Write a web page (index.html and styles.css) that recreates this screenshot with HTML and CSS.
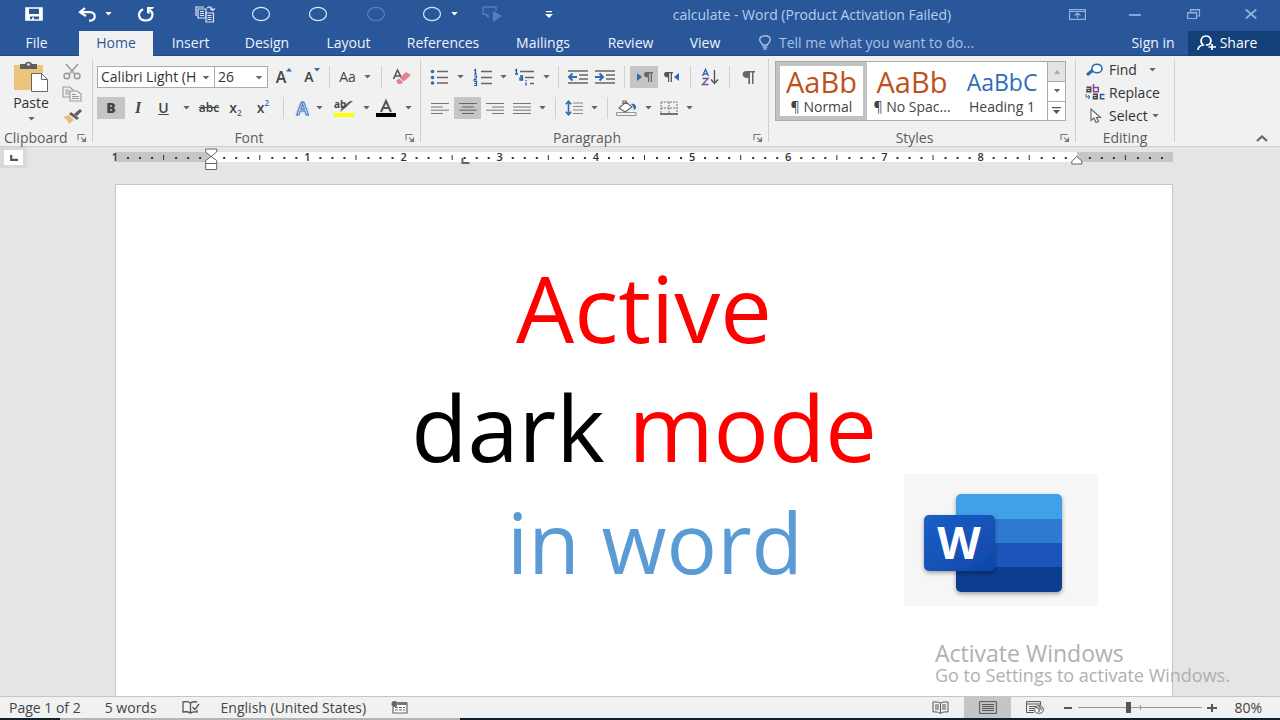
FILE: index.html
```html
<!DOCTYPE html>
<html lang="en">
<head>
<meta charset="utf-8">
<title>calculate - Word</title>
<link rel="stylesheet" href="styles.css">
</head>
<body>
<svg class="defs" aria-hidden="true">
  <symbol id="caret" viewBox="0 0 8 5"><path d="M0 0h8L4 4.500z" fill="currentColor"/></symbol>
  <symbol id="launch" viewBox="0 0 10 9"><path d="M.5 7V.5H8M4 4l4 4M9 4v4.500H4.500" fill="none" stroke="#777" stroke-width="1.200"/><path d="M9.500 4v4.800H4.700z" fill="#777"/></symbol>
  <symbol id="ring" viewBox="0 0 20 16"><ellipse cx="10" cy="8" rx="8.500" ry="6.700" fill="none" stroke="currentColor" stroke-width="1.200"/></symbol>
</svg>
<div class="app">
<header class="titlebar">
  <button aria-label="Save"><svg width="18" height="14" viewBox="0 0 18 14"><path d="M1 1h16v12H1z" fill="none" stroke="#fff" stroke-width="1.600"/><path d="M1 7h16v6h-3V9.500H5V13H1zM1 1h3v6H1zM14 1h3v6h-3zM7 10.500h2V13H7z" fill="#fff"/></svg></button>
  <button aria-label="Undo"><svg width="18" height="15" viewBox="0 0 18 15"><path d="M7 1L2 5.200l6 4M2.500 5.200H12c6.500 0 6.500 8.500-1 8.500" fill="none" stroke="#fff" stroke-width="2.200"/></svg><svg class="caret undo-caret"><use href="#caret"/></svg></button>
  <button aria-label="Repeat"><svg width="18" height="15" viewBox="0 0 18 15"><path d="M6 2.200C-.5 5.500 1.500 13.500 8.500 13.500c7.500 0 9-7.500 4-10.500" fill="none" stroke="#fff" stroke-width="2.200"/><path d="M10 0h7l-1 1.800-3.500.4V7L10 6z" fill="#fff"/></svg></button>
  <button aria-label="Paste options"><svg width="20" height="17" viewBox="0 0 20 17" fill="none" stroke="#dce6f4" stroke-width="1.200"><path d="M1 10V1h8M3 12V3h8v9zM5 5.500h4M5 7.500h4M5 9.500h4"/><path d="M11 7h7.500v9H11z" fill="#2a579a"/><path d="M12.500 9.500h4M12.500 11.500h4M12.500 13.500h4M12 2c3-2 5.500-1 5.500 2.500M15 2.500l2.500 2L20 2.500"/></svg></button>
  <button aria-label="Shape 1"><svg width="20" height="16"><use href="#ring"/></svg></button>
  <button aria-label="Shape 2"><svg width="20" height="16"><use href="#ring"/></svg></button>
  <button class="dim" aria-label="Shape 3" disabled><svg width="20" height="16"><use href="#ring"/></svg></button>
  <button aria-label="Shape 4"><svg width="20" height="16"><use href="#ring"/></svg><svg class="caret undo-caret"><use href="#caret"/></svg></button>
  <button class="dim" aria-label="Comment" disabled><svg width="20" height="16" viewBox="0 0 20 16"><path d="M6 8v3L3.500 8H1V1h13v4" fill="none" stroke="currentColor" stroke-width="1.300"/><path d="M11 5l9 5-9 6z" fill="currentColor"/></svg></button>
  <button aria-label="Customize toolbar"><svg width="8" height="7" viewBox="0 0 8 7"><path d="M1 0h6v1.200H1zM0 3h8L4 7z" fill="#fff"/></svg></button>
  <h1 class="title">calculate - Word (Product Activation Failed)</h1>
  <button class="win" aria-label="Ribbon display options"><svg width="17" height="11" viewBox="0 0 17 11"><path d="M.6.6h15.800v9.800H.6zM.6 2.500h15.800M8.500 9V4M5.500 6.500l3-2.500 3 2.500" fill="none" stroke="currentColor" stroke-width="1.200"/></svg></button>
  <button class="win" aria-label="Minimize"><svg width="12" height="10" viewBox="0 0 12 10"><path d="M0 6h12" stroke="currentColor" stroke-width="1.800"/></svg></button>
  <button class="win" aria-label="Restore"><svg width="13" height="10" viewBox="0 0 13 10"><path d="M.6 3.500h9v6h-9zM3.500 3V.6h9V7h-2.500M.6 4h9M3.500 1h9" fill="none" stroke="currentColor" stroke-width="1.200"/></svg></button>
  <button class="win" aria-label="Close"><svg width="12" height="10" viewBox="0 0 12 10"><path d="M.7.5l10.600 9M11.300.5l-10.600 9" stroke="currentColor" stroke-width="1.700"/></svg></button>
</header>
<nav class="tabs">
  <button class="file">File</button><button class="active">Home</button><button>Insert</button><button>Design</button><button>Layout</button><button>References</button><button>Mailings</button><button>Review</button><button>View</button>
  <label class="tell"><svg width="14" height="15" viewBox="0 0 14 15"><path d="M4.500 10C4.500 8 1.700 7.500 1.700 4.800 1.700 2.300 4 .8 7 .8s5.300 1.500 5.300 4C12.300 7.500 9.500 8 9.500 10zM4.700 12h4.600M5.500 14h3" fill="none" stroke="#a9c1e3" stroke-width="1.400"/></svg><input type="text" aria-label="Tell me what you want to do" placeholder="Tell me what you want to do..."></label>
  <button>Sign in</button>
  <button class="share"><svg width="19" height="16" viewBox="0 0 19 16"><path d="M1 15c0-3 2.500-4.500 5-5C2.500 7 4 1 9 1s6.500 6 3 8.500l-3 .7M15 9v6M11.500 12H19" fill="none" stroke="#fff" stroke-width="1.700"/></svg>Share</button>
</nav>
<section class="ribbon">
  <div class="group clipboard">
    <div class="body">
      <button class="paste"><svg width="36" height="31" viewBox="0 0 36 31"><path d="M1 3h29v25H1z" fill="#ebc57c"/><path d="M7 2h5c1-3 6-3 7 0h5v5H7z" fill="#5f5f5f"/><circle cx="15.500" cy="2.500" r="1.300" fill="#eee"/><path d="M18.500 11.500h10l6 6v12h-16z" fill="#fff" stroke="#666"/><path d="M28.500 11.500v6h6" fill="none" stroke="#666"/></svg><span>Paste</span><svg class="caret"><use href="#caret"/></svg></button>
      <div class="stack">
        <button aria-label="Cut"><svg width="20" height="16" viewBox="0 0 20 16" fill="none" stroke="#999" stroke-width="1.500"><path d="M4 0l9 10.500M16 0L7 10.500"/><circle cx="4.800" cy="12" r="2.800"/><circle cx="15.200" cy="12" r="2.800"/></svg></button>
        <button aria-label="Copy"><svg width="20" height="16" viewBox="0 0 20 16" fill="#f1f1f1" stroke="#999" stroke-width="1.100"><path d="M1 1h7l3 3v7H1z"/><path d="M3 4h4M3 6h5M3 8h5"/><path d="M8 5h7l4 3v7H8z"/><path d="M10 8.500h4M10 10.500h7M10 12.500h7"/></svg></button>
        <button aria-label="Format painter"><svg width="20" height="15" viewBox="0 0 20 15"><path d="M1 8l6-2 5 5-5 4c-1-3-3-5-6-7z" fill="#ebbc78"/><path d="M7 5l2-2 8 6-2 2zM12 5l6-5 2 2-5 5z" fill="#5f5f5f"/></svg></button>
      </div>
    </div>
    <div class="label"><span>Clipboard</span><button aria-label="Clipboard settings"><svg class="launch"><use href="#launch"/></svg></button></div>
  </div>
  <div class="group font">
    <div class="body rows">
      <div class="row font-a">
        <span class="combo"><select aria-label="Font"><option>Calibri Light (Headings)</option></select><svg class="caret"><use href="#caret"/></svg></span>
        <span class="combo"><select aria-label="Font size"><option>26</option></select><svg class="caret"><use href="#caret"/></svg></span>
        <button class="glyph grow" aria-label="Grow font">A<svg width="6" height="4" viewBox="0 0 6 4"><path d="M0 3.500h6L3 0z" fill="#2b6cb0"/></svg></button>
        <button class="glyph shrink" aria-label="Shrink font">A<svg width="6" height="4" viewBox="0 0 6 4"><path d="M0 0h6L3 3.500z" fill="#2b6cb0"/></svg></button>
        <i class="sep"></i>
        <button class="case" aria-label="Change case">Aa<svg class="caret"><use href="#caret"/></svg></button>
        <i class="sep"></i>
        <button aria-label="Clear formatting"><svg width="20" height="17" viewBox="0 0 20 17"><path d="M1.500 10L5.500 1l3.500 7M3 7h5" fill="none" stroke="#555" stroke-width="1.600"/><path d="M4 12L14 3l5 3-10 9H6z" fill="#e58292"/><path d="M7 9l5 4" stroke="#f1f1f1"/></svg></button>
      </div>
      <div class="row font-b">
        <button class="on"><b>B</b></button>
        <button><em>I</em></button>
        <button><u>U</u><svg class="caret"><use href="#caret"/></svg></button>
        <button class="strike"><s>abc</s></button>
        <button class="script">x<sub>2</sub></button>
        <button class="script">x<sup>2</sup></button>
        <i class="sep"></i>
        <button class="outline" aria-label="Text effects"><span>A</span><svg class="caret"><use href="#caret"/></svg></button>
        <button aria-label="Highlight"><svg width="22" height="17" viewBox="0 0 22 17"><path d="M1 13h20v4H1z" fill="#ff0"/><path d="M20 1l-9 8-4 3 2-5 8-6z" fill="#666"/><text x="1" y="8" font-size="10" font-weight="700" fill="#444">ab</text></svg><svg class="caret"><use href="#caret"/></svg></button>
        <button aria-label="Font color"><svg width="22" height="17" viewBox="0 0 22 17"><path d="M1 13h20v4H1z"/><path d="M6 12L11 1l5 11M8 8h6" fill="none" stroke="#555" stroke-width="2"/></svg><svg class="caret"><use href="#caret"/></svg></button>
      </div>
    </div>
    <div class="label"><span>Font</span><button aria-label="Font settings"><svg class="launch"><use href="#launch"/></svg></button></div>
  </div>
  <div class="group paragraph">
    <div class="body rows">
      <div class="row para-a">
        <button aria-label="Bullets"><svg width="19" height="16" viewBox="0 0 19 16"><path d="M7 2.500h11M7 8.500h11M7 14h11" stroke="#666" stroke-width="1.300"/><g fill="#2b6cb0"><circle cx="2.500" cy="2.500" r="1.800"/><circle cx="2.500" cy="8.500" r="1.800"/><circle cx="2.500" cy="14" r="1.800"/></g></svg><svg class="caret"><use href="#caret"/></svg></button>
        <button aria-label="Numbering"><svg width="19" height="17" viewBox="0 0 19 17"><path d="M8 2.500h11M8 8.500h11M8 14.500h11" stroke="#666" stroke-width="1.300"/><path d="M1 1.500L2.500.5V5M1 5h3M1 7h2.500v1.500L1 11h3M1 12.500h2.500v4H1M1.500 14.500h2" fill="none" stroke="#2458a8" stroke-width="1.200"/></svg><svg class="caret"><use href="#caret"/></svg></button>
        <button aria-label="Multilevel list"><svg width="21" height="17" viewBox="0 0 21 17"><path d="M6 2.500h14M11 8.500h9M16 14.500h4" stroke="#666" stroke-width="1.300"/><path d="M1 1.500L2.500.5V5M1 5h3M6 7h2.500v4H6V9h2.500M12 13.500v3M12 11v1.200" fill="none" stroke="#2458a8" stroke-width="1.300"/></svg><svg class="caret"><use href="#caret"/></svg></button>
        <i class="sep"></i>
        <button aria-label="Decrease indent"><svg width="22" height="14" viewBox="0 0 22 14"><path d="M1 1h20M12 5h9M12 9h9M1 13h20" stroke="#666" stroke-width="1.300"/><path d="M10 7H2M5.500 3.500L2 7l3.500 3.500" fill="none" stroke="#2b6cb0" stroke-width="2"/></svg></button>
        <button aria-label="Increase indent"><svg width="22" height="14" viewBox="0 0 22 14"><path d="M1 1h20M12 5h9M12 9h9M1 13h20" stroke="#666" stroke-width="1.300"/><path d="M1 7h8M5.500 3.500L9 7l-3.500 3.500" fill="none" stroke="#2b6cb0" stroke-width="2"/></svg></button>
        <i class="sep"></i>
        <button class="on" aria-label="Left to right"><svg width="17" height="10" viewBox="0 0 17 10"><path d="M1 1l5 4-5 4z" fill="#2b6cb0"/><path d="M10.500 0H17v1.200h-1V10h-1.300V1.200h-1.500V10H12V5.500C7 5.500 7 0 10.500 0z" fill="#666"/></svg></button>
        <button aria-label="Right to left"><svg width="17" height="10" viewBox="0 0 17 10"><path d="M16 1l-5 4 5 4z" fill="#2b6cb0"/><path d="M3.500 0H10v1.200H9V10H7.700V1.200H6.200V10H5V5.500C0 5.500 0 0 3.500 0z" fill="#555"/></svg></button>
        <i class="sep"></i>
        <button aria-label="Sort"><svg width="18" height="18" viewBox="0 0 18 18"><path d="M1.500 8L4.500 1.500 7.500 8M2.500 6h4" fill="none" stroke="#2b6cb0" stroke-width="1.400"/><path d="M1.500 10.500h5.500l-5.500 6H7.500" fill="none" stroke="#80479a" stroke-width="1.400"/><path d="M13.500 2v13M10 11.500l3.500 4 3.500-4" fill="none" stroke="#555" stroke-width="1.400"/></svg></button>
        <i class="sep"></i>
        <button aria-label="Show marks"><svg width="13" height="13" viewBox="0 0 13 13"><path d="M4.500 0H13v1.500h-1.500V13H10V1.500H8V13H6.300V7C-1 7.500-1 0 4.500 0z" fill="#666"/></svg></button>
      </div>
      <div class="row para-b">
        <button aria-label="Align left"><svg width="18" height="11" viewBox="0 0 18 11"><path d="M0 .5h18M0 4h12M0 7.200h18M0 10.500h12" stroke="#777"/></svg></button>
        <button class="on" aria-label="Center"><svg width="18" height="11" viewBox="0 0 18 11"><path d="M0 .5h18M3 4h12M0 7.200h18M3 10.500h12" stroke="#666"/></svg></button>
        <button aria-label="Align right"><svg width="18" height="11" viewBox="0 0 18 11"><path d="M0 .5h18M6 4h12M0 7.200h18M6 10.500h12" stroke="#777"/></svg></button>
        <button aria-label="Justify"><svg width="18" height="11" viewBox="0 0 18 11"><path d="M0 .5h18M0 4h18M0 7.200h18M0 10.500h18" stroke="#777"/></svg><svg class="caret"><use href="#caret"/></svg></button>
        <i class="sep"></i>
        <button aria-label="Line spacing"><svg width="18" height="16" viewBox="0 0 18 16"><path d="M8 3h10M8 6.500h10M8 10h10M8 13.500h10" stroke="#888" stroke-width="1.200"/><path d="M3.500 1v14M.8 4.300l2.700-3 2.700 3M.8 11.700l2.700 3 2.700-3" fill="none" stroke="#2b6cb0" stroke-width="1.600"/></svg><svg class="caret"><use href="#caret"/></svg></button>
        <i class="sep"></i>
        <button aria-label="Shading"><svg width="21" height="16" viewBox="0 0 21 16"><path d="M.6 12.600h19.500v2.800H.6z" fill="#fff" stroke="#888"/><path d="M3 8l7-6 6 5-7 5zM7 5V1h3v3" fill="#fff" stroke="#666" stroke-width="1.200"/><path d="M15 4c4-1 5 2 5 3s-1 3-2 3l-1-4z" fill="#2b6cb0"/></svg><svg class="caret"><use href="#caret"/></svg></button>
        <button aria-label="Borders"><svg width="18" height="14" viewBox="0 0 18 14"><path d="M1 1h16v12H1zM9 1v12M1 7h16" fill="none" stroke="#777" stroke-dasharray="2 1"/><path d="M0 13h18" stroke="#555" stroke-width="1.500"/></svg><svg class="caret wide"><use href="#caret"/></svg></button>
      </div>
    </div>
    <div class="label"><span>Paragraph</span><button aria-label="Paragraph settings"><svg class="launch"><use href="#launch"/></svg></button></div>
  </div>
  <div class="group styles">
    <div class="body">
      <div class="gallery">
        <button class="style picked"><span class="sample">AaBb</span><span>¶ Normal</span></button>
        <button class="style"><span class="sample">AaBb</span><span>¶ No Spac...</span></button>
        <button class="style head"><span class="sample">AaBbC</span><span>Heading 1</span></button>
        <div class="scroll">
          <button class="off" aria-label="Scroll up"><svg width="6" height="4" viewBox="0 0 6 4"><path d="M0 4h6L3 0z" fill="#aaa"/></svg></button>
          <button aria-label="Scroll down"><svg class="caret"><use href="#caret"/></svg></button>
          <button aria-label="More styles"><svg width="9" height="7" viewBox="0 0 9 7"><path d="M0 0h9v1.200H0zM1 3h7L4.500 7z" fill="#555"/></svg></button>
        </div>
      </div>
    </div>
    <div class="label"><span>Styles</span><button aria-label="Styles settings"><svg class="launch"><use href="#launch"/></svg></button></div>
  </div>
  <div class="group editing">
    <div class="body edit">
      <button><svg width="20" height="14" viewBox="0 0 20 14"><path d="M2 12l6-5" stroke="#2b6cb0" stroke-width="3"/><ellipse cx="12" cy="5.500" rx="5" ry="4.300" fill="#fff" stroke="#2b6cb0" stroke-width="1.600"/></svg>Find<svg class="caret far"><use href="#caret"/></svg></button>
      <button><svg width="20" height="17" viewBox="0 0 20 17" fill="none" stroke-width="1.500"><path d="M1.500 3.200h4.200v4.600H2V5.500h3.700" stroke="#444"/><path d="M8.500 0v7.800h4.800V3.500H8.500" stroke="#80479a"/><path d="M8 10.200h4.200v4.600H8.500v-2.300h3.700" stroke="#444"/><path d="M19.500 10.500h-4v4.300h4" stroke="#2458a8"/><path d="M1 10v3h4M3 11l2 2-2 2" stroke="#2b6cb0" stroke-width="1"/></svg>Replace</button>
      <button><svg width="20" height="15" viewBox="0 0 20 15"><path d="M6 1v11.500l3-2.500 2 4.500 2.500-1-2-4h4z" fill="#fff" stroke="#666" stroke-width="1.200"/></svg>Select<svg class="caret"><use href="#caret"/></svg></button>
    </div>
    <div class="label"><span>Editing</span></div>
  </div>
  <button class="collapse" aria-label="Collapse ribbon"><svg width="12" height="7" viewBox="0 0 12 7"><path d="M1 6l5-4.500L11 6" fill="none" stroke="#666" stroke-width="2.200"/></svg></button>
</section>
<main class="workspace">
  <div class="rulerbar">
    <div class="tabstop"><button aria-label="Tab type"><svg width="8" height="6" viewBox="0 0 8 6"><path d="M1.200 0v4.800H8" fill="none" stroke="#555" stroke-width="2.200"/></svg></button></div>
    <svg class="ruler" id="ruler" role="img" aria-label="Ruler"></svg>
  </div>
  <article class="page">
    <p class="red">Active</p>
    <p>dark <span class="red">mode</span></p>
    <p class="blue"> in word</p>
    <svg class="logo" width="194" height="132" viewBox="0 0 194 132" role="img" aria-label="Word">
      <defs><linearGradient id="tile" x2="1" y2="1"><stop stop-color="#1b5fc8"/><stop offset="1" stop-color="#0f47a8"/></linearGradient>
      <clipPath id="book"><rect x="52" y="20" width="106" height="98" rx="5"/></clipPath>
      <filter id="shade" x="-20%" y="-20%" width="140%" height="150%"><feDropShadow dx="0" dy="2" stdDeviation="2" flood-opacity=".35"/></filter></defs>
      <path d="M0 0h194v132H0z" fill="#f6f6f6"/>
      <g filter="url(#shade)"><g clip-path="url(#book)"><path d="M52 20h106v25H52z" fill="#41a0e8"/><path d="M52 45h106v24H52z" fill="#2d7ad3"/><path d="M52 69h106v24H52z" fill="#1b55ba"/><path d="M52 93h106v25H52z" fill="#103c8e"/></g></g>
      <rect x="20" y="41" width="71" height="56" rx="5" fill="url(#tile)" filter="url(#shade)"/>
      <text x="55" y="85" text-anchor="middle" class="logo-letter">W</text>
    </svg>
  </article>
  <aside class="watermark"><strong>Activate Windows</strong><span>Go to Settings to activate Windows.</span></aside>
</main>
<footer class="status">
  <span class="pages">Page 1 of 2</span><span class="words">5 words</span>
  <button class="proof" aria-label="Proofing"><svg width="18" height="13" viewBox="0 0 18 13"><path d="M8.500 2C6 .5 3 .5 1 1v10c3-.5 5-.5 7.500 1V2c2-1.500 4-1.500 6.500-1M8.500 12c2-1.200 4-1.500 6.500-1V9M10.500 6l2.500 2.500L17 3" fill="none" stroke="#555" stroke-width="1.300"/></svg></button>
  <span class="lang">English (United States)</span>
  <button class="macro" aria-label="Macro"><svg width="17" height="13" viewBox="0 0 17 13"><path d="M4 2h12v10H2V6" fill="#fff" stroke="#666" stroke-width="1.200"/><path d="M7 1h9v3H7z" fill="#777"/><path d="M4 6.500h10M4 9h10" stroke="#666" stroke-dasharray="3 1"/><circle cx="3.500" cy="3" r="3" fill="#666"/></svg></button>
  <span class="grow-space"></span>
  <button class="view" aria-label="Read mode"><svg width="17" height="13" viewBox="0 0 17 13"><path d="M8.500 2C6 .8 3 .8 1 1v10c3-.3 5-.2 7.500 1.500C11 10.800 13 10.700 16 11V1c-2-.2-5-.2-7.500 1zv10M3 4h4M3 6h4M3 8h4M10 4h4M10 6h4M10 8h4" fill="none" stroke="#555"/></svg></button>
  <button class="view on" aria-label="Print layout"><svg width="18" height="13" viewBox="0 0 18 13"><path d="M.6.6h16.800v11.800H.6zM3 3.500h12M3 5.500h12M3 7.500h12M3 9.500h12" fill="none" stroke="#555"/></svg></button>
  <button class="view" aria-label="Web layout"><svg width="18" height="13" viewBox="0 0 18 13"><path d="M8 11.500H.6V.6h14V4M.6 3h14M3 5.500h7M3 7.500h5M3 9.500h5" fill="none" stroke="#555"/><ellipse cx="13" cy="8.500" rx="4.300" ry="3.800" fill="#fff" stroke="#555"/><path d="M10 6l3 2v3M13 5l3 4" stroke="#777" stroke-width="1.500" fill="none"/></svg></button>
  <button class="zoom-btn" aria-label="Zoom out"><svg width="8" height="8" viewBox="0 0 8 8"><path d="M0 4h8" stroke="#555" stroke-width="2"/></svg></button>
  <input class="zoom" type="range" min="10" max="150" value="66" aria-label="Zoom">
  <button class="zoom-btn" aria-label="Zoom in"><svg width="10" height="8" viewBox="0 0 10 8"><path d="M0 4h10M5 0v8" stroke="#555" stroke-width="2"/></svg></button>
  <span class="percent">80%</span>
</footer>
<div class="taskbar"></div>
</div>
<script src="ruler.js"></script>
</body>
</html>
```
FILE: ruler.js
```js
// Eleven inches in eighths; the page margins are one inch on each side.
const EIGHTHS = 88;
const pct = n => (n / EIGHTHS * 100) + '%';
let marks = `<rect class="margin" y="5" width="100%" height="10"/>
<rect class="live" x="${pct(8)}" y="5" width="${pct(72)}" height="10"/>`;
for (let i = 0; i < EIGHTHS; i++) {
  if (i % 8 === 0) {
    const inch = Math.abs(i / 8 - 1);
    if (inch > 0 && inch < 9) marks += `<text x="${pct(i)}" y="14">${inch}</text>`;
  } else {
    const tall = i % 8 === 4;
    marks += `<rect x="${pct(i)}" y="${tall ? 8 : 10}" width="${tall ? 1 : 2}" height="${tall ? 5 : 2}"/>`;
  }
}
marks += `<svg class="mark" x="${pct(8)}"><path d="M-5.500 2v3L0 9.500l-5.500 4v9h11v-9L0 9.500 5.500 5V2zM-5.500 16.500h11"/></svg>
<svg class="mark" x="${pct(80)}"><path d="M-5 17v-3l5-4.500 5 4.500v3z"/></svg>
<svg class="mark" x="${pct(28.9)}"><path class="stop" d="M0 11v5h7"/></svg>`;
document.getElementById('ruler').innerHTML = marks;
```
FILE: styles.css
```css
* { box-sizing: border-box; }
body { margin: 0; font: 14px/18px "Open Sans", "Noto Sans", sans-serif; color: #444; }
button, input, select { font: inherit; color: inherit; border: 0; background: none; padding: 0; margin: 0; }
button { display: flex; align-items: center; justify-content: center; white-space: nowrap; }
svg { flex: none; overflow: visible; display: block; }
.defs { position: absolute; width: 0; height: 0; }
.caret { width: 7px; height: 4px; color: #666; margin-left: 8px; }
.launch { width: 10px; height: 8px; }
.app { height: 100vh; display: flex; flex-direction: column; background: #e5e5e5; overflow: hidden; }

.titlebar { display: grid; grid-template-columns: 68px 54px 48px 70px 42px 72px 44px 84px 20px 94px 1fr repeat(4, 58px); height: 31px; background: #2a579a; color: #dce6f4; align-items: start; flex: none; }
.titlebar button { height: 28px; }
.titlebar .undo-caret { color: #fff; margin-left: 9px; }
.titlebar .dim { color: #5580bd; }
.titlebar .win { color: #8fb0dd; }
.title { margin: 0; padding-right: 20px; font-size: 14px; line-height: 30px; font-weight: 400; text-align: center; color: #b8cdea; white-space: nowrap; }

.tabs { display: grid; grid-template-columns: 79px 74px 75px 78px 85px 104px 96px 79px 70px 1fr 70px 92px; height: 25px; flex: none; background: #2a579a; color: #eef3fa; border-bottom: 1px solid #20477f; }
.tabs button, .tell { padding-bottom: 2px; }
.tabs .file { padding-right: 6px; }
.tabs .active { background: #f1f1f1; color: #2a579a; height: 25px; font-weight: 500; }
.tell { display: flex; align-items: center; padding-left: 18px; gap: 7px; }
.tell input { flex: 1; min-width: 0; }
.tell input::placeholder { color: #a9c1e3; opacity: 1; }
.tabs .share { background: #124078; gap: 4px; color: #fff; padding-right: 14px; }

.ribbon { display: flex; flex: none; background: #f1f1f1; border-bottom: 1px solid #cfcfcf; height: 91px; }
.group { display: flex; flex-direction: column; padding-top: 2px; flex: none; border-right: 1px solid #d0d0d0; margin: 3px 0 4px; }
.body { height: 68px; display: flex; flex: none; }
.label { display: flex; height: 18px; align-items: center; color: #5c5c5c; }
.label span { flex: 1; text-align: center; }
.label button { width: 10px; margin-right: 5px; }
.group.clipboard { width: 93px; }
.clipboard .label span { flex: none; padding-left: 4px; margin-right: auto; }
.paste { flex-direction: column; width: 62px; justify-content: flex-start; padding-top: 1px; gap: 1px; color: #333; }
.paste span { line-height: 18px; }
.paste .caret { margin: 4px 0 0; }
.stack { display: grid; grid-template-rows: repeat(3, 22px); width: 20px; }
.font { width: 328px; }
.paragraph { width: 348px; }
.styles { width: 307px; }
.editing { width: 99px; }
.rows { flex-direction: column; gap: 9px; padding: 5px 0 0 4px; }
.row { display: grid; height: 22px; }
.font-a { grid-template-columns: 118px 53px 32px 24px 10px 42px 10px 32px; }
.font-b { grid-template-columns: 28px 26px 46px 24px 29px 26px 14px 40px 42px 42px; }
.para-a { grid-template-columns: 44px 42px 41px 12px 27px 28px 11px 28px 27px 10px 30px 8px 30px; }
.para-b { grid-template-columns: 29px 27px 28px 40px 12px 40px 12px 42px 42px; }
.on { background: #c5c5c5; }
.sep { width: 1px; background: #d0d0d0; justify-self: center; }
.combo { position: relative; display: flex; border: 1px solid #ababab; background: #fff; }
.combo + .combo { border-left-width: 0; }
.combo select { appearance: none; width: 100%; padding: 0 18px 0 3px; overflow: hidden; color: #333; text-overflow: clip; }
.combo .caret { position: absolute; right: 4px; top: 9px; pointer-events: none; width: 8px; }
.glyph { font-size: 16px; font-weight: 600; }
.glyph svg { align-self: flex-start; margin-top: 2px; }
.shrink { font-size: 14px; }
.font-b button { font-size: 14px; font-weight: 600; }
.font-b em { font-family: "Liberation Serif", serif; font-weight: 700; font-size: 16px; }
.font-b u + .caret { margin-left: 14px; }
.font-b .strike { font-size: 12px; }
.script sub, .script sup { font-size: 8px; line-height: 8px; color: #2b6cb0; }
.script sub { align-self: flex-end; margin-bottom: 2px; }
.script sup { align-self: flex-start; margin-top: 2px; }
.outline span { font-size: 18px; color: #fff; -webkit-text-stroke: 1px #3b78c4; text-shadow: 0 0 3px #8bb5ea; }

.styles .body { padding: 0 9px 0 6px; }
.gallery { display: grid; grid-template-columns: 91px 90px 1fr 18px; flex: 1; height: 60px; border: 1px solid #ababab; background: #fff; }
.style { flex-direction: column; line-height: 18px; color: #444; justify-content: flex-start; padding-top: 4px; }
.style.picked { border: 4px solid #c2c2c2; padding-top: 0; }
.sample { font: 29px/32px "Open Sans", sans-serif; color: #c0501c; }
.style.head .sample { font-size: 23px; color: #2e6db5; }
.scroll { display: grid; grid-template-rows: repeat(3, 1fr); border-left: 1px solid #ababab; }
.scroll button + button { border-top: 1px solid #ababab; }
.scroll .caret { margin: 0; width: 8px; }
.scroll .off { background: #e3e3e3; }
.edit { flex-direction: column; height: 71px; margin-top: -3px; }
.edit button { height: 23px; justify-content: flex-start; padding-left: 9px; gap: 4px; color: #333; line-height: 16px; }
.edit .caret { margin-left: 0; }
.edit .caret.far { margin-left: 8px; }
.collapse { margin: auto 12px 4px auto; }

.workspace { flex: 1; min-height: 0; position: relative; display: flex; flex-direction: column; overflow: hidden; }
.rulerbar { display: flex; height: 37px; flex: none; padding-right: 107px; }
.tabstop { width: 27px; height: 21px; background: #d9d9d9; padding: 3px 4px; margin-right: 88px; }
.tabstop button { width: 19px; height: 15px; background: #fff; }
.ruler { flex: 1; height: 24px; font-size: 11px; font-weight: 600; text-anchor: middle; fill: #333; }
.ruler .margin { fill: #c6c6c6; }
.ruler .live { fill: #fff; }
.mark { fill: #fff; stroke: #666; }
.mark .stop { fill: none; stroke-width: 2px; }
.page { flex: 1; position: relative; margin: 0 107px 0 115px; background: #fff; border: 1px solid #c6c6c6; border-bottom: 0; padding-top: 63px; text-align: center; font: 92px/119px "Open Sans", sans-serif; color: #000; }
.page p { margin: 0; white-space: pre; }
.red { color: #f00; }
.page .blue { color: #5b9bd5; font-size: 84px; line-height: 112px; }
.logo { position: absolute; right: 74px; top: 289px; }
.logo-letter { font: 700 45px "Open Sans", sans-serif; fill: #fff; }
.watermark { position: absolute; left: 935px; bottom: 10px; display: flex; flex-direction: column; color: #b0b0b0; white-space: nowrap; font-size: 18px; line-height: 22px; }
.watermark strong { font-weight: 400; font-size: 23px; }

.status { display: flex; align-items: center; height: 22px; flex: none; background: #f1f1f1; border-top: 1px solid #c6c6c6; }
.pages { margin-left: 9px; }
.words { margin-left: 24px; }
.proof { margin-left: 25px; }
.lang { margin-left: 21px; }
.macro { margin-left: 25px; }
.grow-space { flex: 1; }
.view { width: 47px; height: 21px; }
.zoom-btn { width: 20px; height: 20px; }
.zoom { appearance: none; width: 124px; height: 14px; background: linear-gradient(#999, #999) center / 100% 1px no-repeat, linear-gradient(#999, #999) 50% 50% / 1px 5px no-repeat; }
.zoom::-webkit-slider-thumb { appearance: none; width: 5px; height: 11px; background: #555; }
.percent { margin: 0 18px 0 12px; }
.taskbar { height: 2px; flex: none; background: linear-gradient(90deg, #10202c 60px, #b5b5b5 60px 460px, #10202c 460px); }
```
